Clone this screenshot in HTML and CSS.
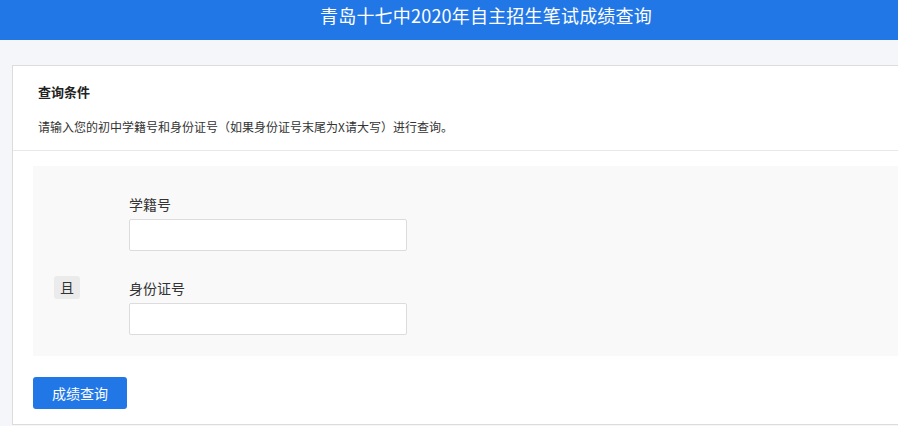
FILE: index.html
```html
<!DOCTYPE html>
<html lang="zh-CN">
<head>
<meta charset="utf-8">
<title>青岛十七中2020年自主招生笔试成绩查询</title>
<link rel="stylesheet" href="styles.css">
</head>
<body>
<div class="page">
  <header class="topbar">青岛十七中2020年自主招生笔试成绩查询</header>
  <main class="main">
    <section class="card">
      <div class="card-head">
        <div class="card-title">查询条件</div>
        <div class="card-desc">请输入您的初中学籍号和身份证号（如果身份证号末尾为X请大写）进行查询。</div>
      </div>
      <div class="card-body">
        <div class="cond">
          <div class="cond-op"><span class="badge">且</span></div>
          <div class="fields">
            <label class="field">
              <span class="field-label">学籍号</span>
              <input class="field-input" type="text">
            </label>
            <label class="field">
              <span class="field-label">身份证号</span>
              <input class="field-input" type="text">
            </label>
          </div>
        </div>
        <button class="btn" type="button">成绩查询</button>
      </div>
    </section>
  </main>
</div>
</body>
</html>
```

FILE: styles.css
```css
html, body {
  margin: 0;
  padding: 0;
  overflow: hidden;
}
body {
  background: #f5f6fa;
  font-family: "Microsoft YaHei", "Noto Sans CJK SC", "Noto Sans", sans-serif;
  color: #333;
}
.page {
  width: 972px;
}
.topbar {
  height: 40px;
  line-height: 30px;
  background: #2277e6;
  color: #fff;
  font-size: 18px;
  letter-spacing: 0.2px;
  text-align: center;
}
.main {
  padding: 25px 12px;
}
.card {
  background: #fff;
  border: 1px solid #dcdcdc;
}
.card-head {
  padding: 16px 25px 13px;
  border-bottom: 1px solid #e8e8e8;
}
.card-title {
  font-size: 13px;
  font-weight: bold;
  line-height: 20px;
  color: #222;
}
.card-desc {
  margin-top: 15px;
  font-size: 12px;
  line-height: 20px;
  color: #333;
}
.card-body {
  padding: 15px 20px 15px;
}
.cond {
  display: flex;
  background: #f9f9f9;
  padding: 28px 20px 21px 21px;
}
.cond-op {
  width: 75px;
  flex: none;
}
.badge {
  display: inline-block;
  margin-top: 82px;
  width: 26px;
  height: 23px;
  line-height: 23px;
  text-align: center;
  font-size: 14px;
  background: #ebebeb;
  border-radius: 3px;
  color: #333;
}
.fields {
  display: flex;
  flex-direction: column;
  gap: 27px;
}
.field {
  display: flex;
  flex-direction: column;
  gap: 5px;
}
.field-label {
  font-size: 14px;
  line-height: 20px;
  color: #333;
}
.field-input {
  box-sizing: border-box;
  width: 278px;
  height: 32px;
  margin: 0;
  border: 1px solid #dcdcdc;
  border-radius: 2px;
  background: #fff;
  outline: none;
}
.btn {
  display: block;
  margin-top: 21px;
  width: 94px;
  height: 32px;
  border: none;
  border-radius: 3px;
  background: #2277e6;
  color: #fff;
  font-family: inherit;
  font-size: 14px;
  padding: 0;
}
```
